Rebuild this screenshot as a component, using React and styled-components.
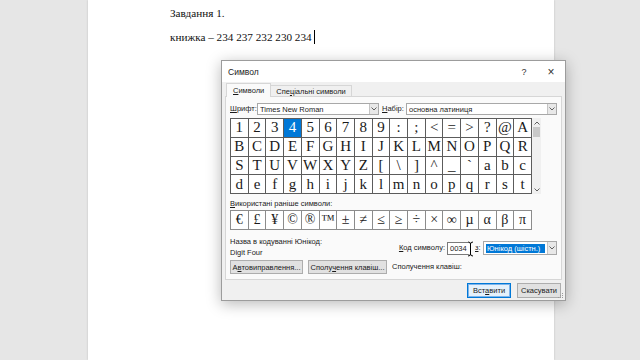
import React from "react";
import styled, { createGlobalStyle } from "styled-components";

const GlobalStyle = createGlobalStyle`
  html, body { margin: 0; padding: 0; width: 640px; height: 360px; overflow: hidden; background: #e6e6e6; }
  #root { width: 640px; height: 360px; }
  * { box-sizing: border-box; }
`;

const UI = `"Liberation Sans", Arial, sans-serif`;
const SERIF = `"Liberation Serif", "Times New Roman", serif`;

const Desk = styled.div`
  position: relative;
  width: 640px;
  height: 360px;
  background: #e6e6e6;
  display: flex;
`;

const Page = styled.div`
  margin-left: 88px;
  width: 466px;
  height: 100%;
  background: #fff;
  box-shadow: 0 0 2px rgba(0, 0, 0, 0.18);
  padding: 1px 0 0 82px;
  font-family: ${SERIF};
  font-size: 11.2px;
  color: #111;
`;

const DocLine = styled.div`
  height: 24px;
  display: flex;
  align-items: center;
  white-space: pre;
`;

const Caret = styled.span`
  display: inline-block;
  width: 1px;
  height: 14px;
  background: #000;
  margin-left: 2px;
`;

const Dialog = styled.div`
  position: absolute;
  left: 221px;
  top: 60px;
  width: 345px;
  height: 241px;
  background: #f0f0f0;
  border: 1px solid #9c9c9c;
  box-shadow: 0 3px 14px rgba(0, 0, 0, 0.28);
  font-family: ${UI};
  font-size: 7.5px;
  color: #1a1a1a;
  display: flex;
  flex-direction: column;
`;

const TitleBar = styled.div`
  height: 21px;
  background: #fff;
  display: flex;
  align-items: center;
  padding: 0 4px 0 6px;
  font-size: 8.5px;
  color: #222;
`;

const Title = styled.div`
  flex: 1;
`;

const TitleBtn = styled.div`
  width: ${(p) => p.$w}px;
  margin-right: ${(p) => p.$mr || 0}px;
  text-align: center;
  font-size: ${(p) => p.$size}px;
  color: #333;
`;

const Tabs = styled.div`
  display: flex;
  padding-left: 4px;
  margin-top: 1px;
  height: 14px;
  align-items: flex-end;
  position: relative;
  z-index: 1;
`;

const Tab = styled.div`
  height: ${(p) => (p.$active ? 14 : 12)}px;
  padding: 0 ${(p) => (p.$active ? 6 : 5)}px;
  display: flex;
  align-items: center;
  border: 1px solid #d6d6d6;
  border-bottom: ${(p) => (p.$active ? "none" : "1px solid #d6d6d6")};
  background: ${(p) => (p.$active ? "#fafafa" : "#f0f0f0")};
  margin-left: ${(p) => (p.$active ? 0 : -1)}px;
`;

const Panel = styled.div`
  margin: -1px 3px 0 3px;
  height: 184px;
  border: 1px solid #d6d6d6;
  background: #fafafa;
  padding: 0 4px;
  display: flex;
  flex-direction: column;
`;

const FontRow = styled.div`
  margin-top: 6px;
  height: 12px;
  display: flex;
  align-items: center;
`;

const Label = styled.div`
  width: ${(p) => (p.$w ? `${p.$w}px` : "auto")};
  margin-left: ${(p) => p.$ml || 0}px;
  white-space: nowrap;
  line-height: 10px;
`;

const Select = styled.div`
  width: ${(p) => p.$w}px;
  height: ${(p) => p.$h || 12}px;
  border: 1px solid #a8a8a8;
  background: #fff;
  display: flex;
  align-items: center;
  padding-left: 2px;
`;

const SelectText = styled.div`
  flex: 1;
  white-space: nowrap;
  overflow: hidden;
`;

const Highlight = styled.span`
  display: block;
  background: #0078d7;
  color: #fff;
  padding-left: 1px;
  line-height: 9px;
  margin-right: 2px;
`;

const DropBtn = styled.div`
  width: 9px;
  height: 100%;
  background: #e8e8e8;
  border-left: 1px solid #c4c4c4;
  display: flex;
  align-items: center;
  justify-content: center;
`;

const Chevron = ({ up }) => (
  <svg width="6" height="4" viewBox="0 0 6 4">
    <path
      d={up ? "M0.5 3.5 L3 1 L5.5 3.5" : "M0.5 0.5 L3 3 L5.5 0.5"}
      fill="none"
      stroke="#606060"
      strokeWidth="1"
    />
  </svg>
);

const GridArea = styled.div`
  margin-top: 3px;
  display: flex;
`;

const CharGrid = styled.div`
  width: 302px;
  height: 76px;
  display: grid;
  grid-template-columns: repeat(17, 1fr);
  grid-template-rows: repeat(${(p) => p.$rows}, 1fr);
  gap: 1px;
  padding: 1px;
  background: ${(p) => p.$line};
`;

const Cell = styled.div`
  background: ${(p) => (p.$sel ? "#0078d7" : "#fff")};
  color: ${(p) => (p.$sel ? "#fff" : "#1a1a1a")};
  display: flex;
  align-items: center;
  justify-content: center;
  font-family: ${SERIF};
  font-size: ${(p) => p.$size}px;
  line-height: 1;
  overflow: hidden;
`;

const ScrollBar = styled.div`
  width: 9px;
  height: 76px;
  background: #f0f0f0;
  display: flex;
  flex-direction: column;
  align-items: center;
`;

const ScrollArrow = styled.div`
  height: 9px;
  width: 100%;
  display: flex;
  align-items: center;
  justify-content: center;
`;

const Thumb = styled.div`
  width: 7px;
  height: 10px;
  background: #c9c9c9;
`;

const Track = styled.div`
  flex: 1;
`;

const RecentLabel = styled.div`
  margin-top: 5px;
  line-height: 10px;
`;

const RecentGrid = styled(CharGrid)`
  margin-top: 1px;
  height: 20px;
`;

const InfoRow = styled.div`
  margin-top: 6px;
  display: flex;
  justify-content: space-between;
`;

const InfoCol = styled.div`
  display: flex;
  flex-direction: column;
  line-height: 11px;
`;

const CodeRow = styled.div`
  margin-top: 5px;
  display: flex;
  align-items: center;
  height: 14px;
`;

const CodeInput = styled.div`
  position: relative;
  width: 24px;
  height: 13px;
  border: 1px solid #7a7a7a;
  background: #fff;
  padding-left: 2px;
  display: flex;
  align-items: center;
  margin: 0 4px 0 2px;
`;

const IBeam = styled.svg`
  position: absolute;
  right: -4px;
  top: -2px;
`;

const ButtonsRow = styled.div`
  margin-top: 2px;
  display: flex;
  align-items: center;
  gap: 5px;
`;

const Button = styled.div`
  height: ${(p) => p.$h || 14}px;
  width: ${(p) => (p.$w ? `${p.$w}px` : "auto")};
  padding: 0 5px;
  display: flex;
  align-items: center;
  justify-content: center;
  white-space: nowrap;
  background: ${(p) => (p.$default ? "#e5f1fb" : "#e1e1e1")};
  border: 1px solid ${(p) => (p.$default ? "#0078d7" : "#adadad")};
  box-shadow: ${(p) => (p.$default ? "inset 0 0 0 1px #7eb4ea" : "none")};
`;

const Footer = styled.div`
  margin-top: 3px;
  display: flex;
  justify-content: flex-end;
  gap: 6px;
  padding-right: 4px;
`;

const Grip = styled.svg`
  position: absolute;
  right: 1px;
  bottom: 1px;
`;

const U = styled.span`
  text-decoration: underline;
`;

const rows = [
  "123456789:;<=>?@A",
  "BCDEFGHIJKLMNOPQR",
  "STUVWXYZ[\\]^_`abc",
  "defghijklmnopqrst",
];
const recent = ["€", "£", "¥", "©", "®", "™", "±", "≠", "≤", "≥", "÷", "×", "∞", "µ", "α", "β", "π"];

export default function App() {
  return (
    <>
      <GlobalStyle />
      <Desk>
        <Page>
          <DocLine>Завдання 1.</DocLine>
          <DocLine>
            книжка – 234 237 232 230 234
            <Caret />
          </DocLine>
        </Page>

        <Dialog>
          <TitleBar>
            <Title>Символ</Title>
            <TitleBtn $w={14} $size={9} $mr={10}>?</TitleBtn>
            <TitleBtn $w={20} $size={12}>×</TitleBtn>
          </TitleBar>

          <Tabs>
            <Tab $active>
              <U>С</U>имволи
            </Tab>
            <Tab>
              Спе<U>ц</U>іальні символи
            </Tab>
          </Tabs>

          <Panel>
            <FontRow>
              <Label $w={27}>
                <U>Ш</U>рифт:
              </Label>
              <Select $w={122}>
                <SelectText>Times New Roman</SelectText>
                <DropBtn>
                  <Chevron />
                </DropBtn>
              </Select>
              <Label $w={24} $ml={3}>
                <U>Н</U>абір:
              </Label>
              <Select $w={151}>
                <SelectText>основна латиниця</SelectText>
                <DropBtn>
                  <Chevron />
                </DropBtn>
              </Select>
            </FontRow>

            <GridArea>
              <CharGrid $rows={4} $line="#5c5c5c">
                {rows.map((r, ri) =>
                  r.split("").map((ch, ci) => (
                    <Cell key={`${ri}-${ci}`} $size={15} $sel={ri === 0 && ci === 3}>
                      {ch}
                    </Cell>
                  ))
                )}
              </CharGrid>
              <ScrollBar>
                <ScrollArrow>
                  <Chevron up />
                </ScrollArrow>
                <Thumb />
                <Track />
                <ScrollArrow>
                  <Chevron />
                </ScrollArrow>
              </ScrollBar>
            </GridArea>

            <RecentLabel>
              <U>В</U>икористані раніше символи:
            </RecentLabel>
            <RecentGrid $rows={1} $line="#8c8c8c">
              {recent.map((ch, i) => (
                <Cell key={i} $size={14}>
                  {ch}
                </Cell>
              ))}
            </RecentGrid>

            <InfoRow>
              <InfoCol>
                <div>Назва в кодуванні Юнікод:</div>
                <div>Digit Four</div>
              </InfoCol>
              <CodeRow>
                <Label>
                  <U>К</U>од символу:
                </Label>
                <CodeInput>
                  0034
                  <IBeam width="7" height="16" viewBox="0 0 7 16">
                    <path
                      d="M1 1 Q3.5 1 3.5 3 Q3.5 1 6 1 M3.5 3 V13 M1 15 Q3.5 15 3.5 13 Q3.5 15 6 15"
                      fill="none"
                      stroke="#fff"
                      strokeWidth="2.2"
                    />
                    <path
                      d="M1 1 Q3.5 1 3.5 3 Q3.5 1 6 1 M3.5 3 V13 M1 15 Q3.5 15 3.5 13 Q3.5 15 6 15"
                      fill="none"
                      stroke="#000"
                      strokeWidth="1"
                    />
                  </IBeam>
                </CodeInput>
                <Label $w={8}>
                  <U>з</U>:
                </Label>
                <Select $w={74} $h={14}>
                  <SelectText>
                    <Highlight>Юнікод (шістн.)</Highlight>
                  </SelectText>
                  <DropBtn>
                    <Chevron />
                  </DropBtn>
                </Select>
              </CodeRow>
            </InfoRow>

            <ButtonsRow>
              <Button $w={73}>
                А<U>в</U>товиправлення...
              </Button>
              <Button $w={79}>
                Сполу<U>ч</U>ення клавіш...
              </Button>
              <Label>Сполучення клавіш:</Label>
            </ButtonsRow>
          </Panel>

          <Footer>
            <Button $default $w={44} $h={15}>
              Вст<U>а</U>вити
            </Button>
            <Button $w={44} $h={15}>
              Скасувати
            </Button>
          </Footer>

          <Grip width="8" height="8" viewBox="0 0 8 8">
            <g fill="#9a9a9a">
              <rect x="6" y="2" width="1" height="1" />
              <rect x="4" y="4" width="1" height="1" />
              <rect x="6" y="4" width="1" height="1" />
              <rect x="2" y="6" width="1" height="1" />
              <rect x="4" y="6" width="1" height="1" />
              <rect x="6" y="6" width="1" height="1" />
            </g>
          </Grip>
        </Dialog>
      </Desk>
    </>
  );
}
